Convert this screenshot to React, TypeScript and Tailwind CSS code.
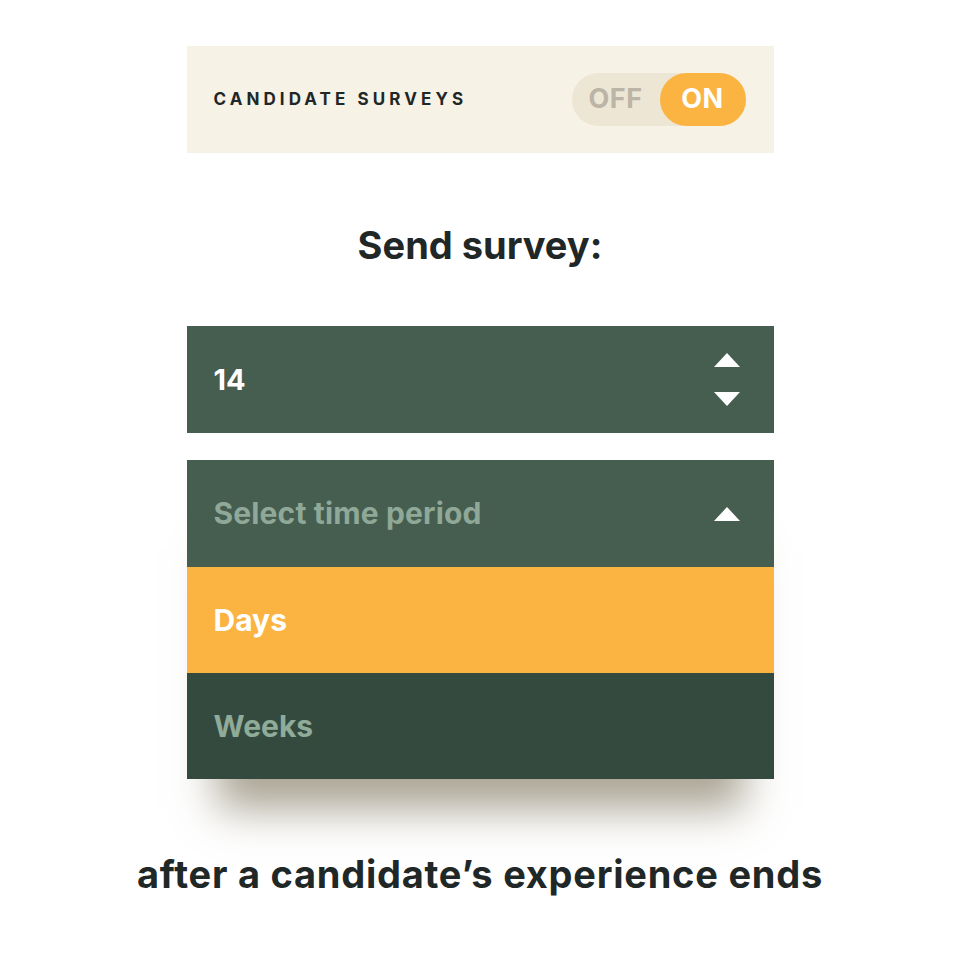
import React, { useState } from 'react';

const Up = () => (
  <svg width="26" height="14" viewBox="0 0 26 14">
    <path d="M13 0 L26 14 L0 14 Z" fill="#ffffff" />
  </svg>
);

const Down = () => (
  <svg width="26" height="14" viewBox="0 0 26 14">
    <path d="M0 0 L26 0 L13 14 Z" fill="#ffffff" />
  </svg>
);

const App: React.FC = () => {
  const [on, setOn] = useState(true);

  return (
    <div className="w-[960px] h-[960px] bg-white flex flex-col items-center text-[#1f2727]" style={{ fontFamily: 'Inter, "Noto Sans", sans-serif' }}>
      <div className="mt-[46px] w-[587px] h-[107px] bg-[#f6f2e6] flex items-center justify-between pl-[27px] pr-[28px]">
        <span className="text-[17px] font-bold tracking-[0.24em]">CANDIDATE SURVEYS</span>
        <button
          onClick={() => setOn(!on)}
          className="w-[174px] h-[53px] rounded-full bg-[#ede6d4] flex items-center text-[27px] font-bold"
        >
          <span className={`w-[88px] h-full rounded-full flex items-center justify-center tracking-[0.02em] ${on ? 'text-[#bcb4a6]' : 'bg-[#fbb442] text-white'}`}>OFF</span>
          <span className={`w-[86px] h-full rounded-full flex items-center justify-center tracking-[0.02em] ${on ? 'bg-[#fbb442] text-white' : 'text-[#bcb4a6]'}`}>ON</span>
        </button>
      </div>

      <h2 className="mt-[73px] text-[38px] font-bold leading-none">Send survey:</h2>

      <div className="mt-[62px] w-[587px] h-[107px] bg-[#465e50] flex items-center justify-between pl-[27px] pr-[34px]">
        <span className="text-[29px] font-bold text-white">14</span>
        <div className="flex flex-col gap-[25px]">
          <Up />
          <Down />
        </div>
      </div>

      <div className="mt-[27px] w-[587px] shadow-[0_60px_40px_-30px_rgba(100,90,60,0.55)]">
        <div className="h-[107px] bg-[#465e50] flex items-center justify-between pl-[27px] pr-[34px]">
          <span className="text-[30px] font-bold text-[#8fa898] tracking-[0.005em]">Select time period</span>
          <Up />
        </div>
        <div className="h-[106px] bg-[#fbb442] flex items-center pl-[27px]">
          <span className="text-[30px] font-bold text-white">Days</span>
        </div>
        <div className="h-[106px] bg-[#354a3f] flex items-center pl-[27px]">
          <span className="text-[30px] font-bold text-[#8fab99]">Weeks</span>
        </div>
      </div>

      <p className="mt-[76px] text-[38px] font-bold leading-none tracking-[0.02em]">after a candidate’s experience ends</p>
    </div>
  );
};

export default App;
